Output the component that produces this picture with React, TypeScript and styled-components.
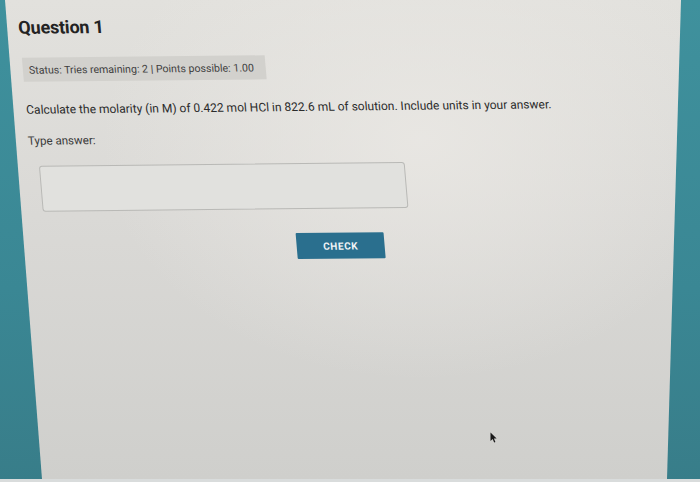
import styled, { createGlobalStyle } from 'styled-components';

const GlobalStyle = createGlobalStyle`
  html, body {
    margin: 0;
    padding: 0;
    background: #3d8b97;
  }
  * {
    box-sizing: border-box;
  }
`;

const Screen = styled.div`
  position: relative;
  width: 700px;
  height: 482px;
  overflow: hidden;
  display: flex;
  flex-direction: column;
  background: linear-gradient(180deg, #3f919d 0%, #3a8794 60%, #387d89 100%);
  font-family: Roboto, 'Liberation Sans', sans-serif;
`;

const Panel = styled.main`
  flex: 1;
  background:
    radial-gradient(ellipse 320px 240px at 420px 140px, rgba(234, 232, 228, 0.85), rgba(234, 232, 228, 0) 100%),
    linear-gradient(180deg, #e2e1dd 0%, #dad9d6 45%, #cfcfcc 100%);
  clip-path: polygon(5px 0, 681px 0, 667px 100%, 42px 100%);
  overflow: hidden;
`;

const Content = styled.div`
  display: flex;
  flex-direction: column;
  align-items: flex-start;
  padding: 17px 0 0 16px;
  transform-origin: top left;
  transform: skewX(4.2deg) rotate(-0.6deg);
`;

const Title = styled.h1`
  margin: 0;
  font-size: 18px;
  font-weight: 700;
  color: #232323;
  letter-spacing: -0.2px;
`;

const StatusBar = styled.div`
  margin: 20px 0 0 1px;
  width: 243px;
  height: 24px;
  display: flex;
  align-items: center;
  padding-left: 6px;
  background: #d2d1cd;
  font-size: 10.6px;
  color: #3e3e3e;
`;

const Prompt = styled.p`
  margin: 21px 0 0 1px;
  font-size: 12px;
  letter-spacing: 0;
  color: #2b2b2b;
`;

const Label = styled.label`
  margin: 17px 0 0 0;
  font-size: 11.6px;
  color: #3a3a3a;
`;

const AnswerInput = styled.input`
  margin: 18px 0 0 9px;
  width: 366px;
  height: 46px;
  border: 1px solid #b9b9b6;
  border-radius: 3px;
  background: #e1e1de;
  outline: none;
`;

const ButtonRow = styled.div`
  width: 348px;
  display: flex;
  justify-content: flex-end;
  margin-top: 24px;
`;

const CheckButton = styled.button`
  width: 88px;
  height: 26px;
  border: none;
  border-radius: 1px;
  background: #2a6f8e;
  color: #f1f4f6;
  font-family: Roboto, 'Liberation Sans', sans-serif;
  font-size: 10px;
  font-weight: 700;
  letter-spacing: 0.6px;
  cursor: pointer;
`;

const BottomStrip = styled.div`
  height: 3px;
  background: #d9dcdc;
`;

const Pointer = styled.svg`
  position: absolute;
  left: 490px;
  top: 432px;
  width: 7px;
  height: 11px;
`;

export default function App() {
  return (
    <>
      <GlobalStyle />
      <Screen>
        <Panel>
          <Content>
            <Title>Question 1</Title>
            <StatusBar>Status: Tries remaining: 2 | Points possible: 1.00</StatusBar>
            <Prompt>
              Calculate the molarity (in M) of 0.422 mol HCl in 822.6 mL of solution. Include units in your answer.
            </Prompt>
            <Label htmlFor="answer">Type answer:</Label>
            <AnswerInput id="answer" type="text" />
            <ButtonRow>
              <CheckButton>CHECK</CheckButton>
            </ButtonRow>
          </Content>
        </Panel>
        <BottomStrip />
        <Pointer viewBox="0 0 7 11">
          <path d="M0.5 0.5 L0.5 9 L2.6 7 L4.2 10.5 L5.4 10 L3.9 6.6 L6.6 6.4 Z" fill="#1a1a1a" />
        </Pointer>
      </Screen>
    </>
  );
}
